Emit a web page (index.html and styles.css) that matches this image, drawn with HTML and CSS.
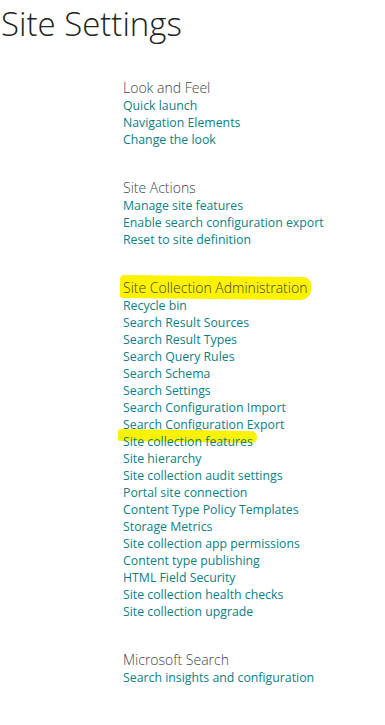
FILE: index.html
```html
<!DOCTYPE html>
<html lang="en">
<head>
    <meta charset="UTF-8">
    <meta name="viewport" content="width=device-width, initial-scale=1.0">
    <title>Site Settings</title>
    <link rel="stylesheet" href="styles.css">
</head>
<body>
    <h1 class="page-title">Site Settings</h1>

    <div class="settings">
        <div class="group">
            <h3>Look and Feel</h3>
            <a href="#">Quick launch</a>
            <a href="#">Navigation Elements</a>
            <a href="#">Change the look</a>
        </div>

        <div class="group">
            <h3>Site Actions</h3>
            <a href="#">Manage site features</a>
            <a href="#">Enable search configuration export</a>
            <a href="#">Reset to site definition</a>
        </div>

        <div class="group">
            <h3><span class="marker marker-big">Site Collection Administration</span></h3>
            <a href="#">Recycle bin</a>
            <a href="#">Search Result Sources</a>
            <a href="#">Search Result Types</a>
            <a href="#">Search Query Rules</a>
            <a href="#">Search Schema</a>
            <a href="#">Search Settings</a>
            <a href="#">Search Configuration Import</a>
            <a href="#">Search Configuration Export</a>
            <a href="#"><span class="marker marker-small">Site collection features</span></a>
            <a href="#">Site hierarchy</a>
            <a href="#">Site collection audit settings</a>
            <a href="#">Portal site connection</a>
            <a href="#">Content Type Policy Templates</a>
            <a href="#">Storage Metrics</a>
            <a href="#">Site collection app permissions</a>
            <a href="#">Content type publishing</a>
            <a href="#">HTML Field Security</a>
            <a href="#">Site collection health checks</a>
            <a href="#">Site collection upgrade</a>
        </div>

        <div class="group">
            <h3>Microsoft Search</h3>
            <a href="#">Search insights and configuration</a>
        </div>
    </div>
</body>
</html>
```

FILE: styles.css
```css
body {
    margin: 0;
    padding: 0;
    background: #fff;
    font-family: 'Open Sans', 'Noto Sans', sans-serif;
    color: #333;
}
.page-title {
    margin: 0;
    padding: 3px 0 0 1px;
    font-size: 33px;
    font-weight: 300;
    line-height: 42px;
    color: #222;
}
.settings {
    padding: 34px 0 0 123px;
}
.group {
    display: flex;
    flex-direction: column;
    align-items: flex-start;
    margin-bottom: 31px;
}
.group h3 {
    margin: 0;
    font-size: 14px;
    font-weight: 300;
    line-height: 18px;
    color: #444;
}
.group a {
    font-size: 12.3px;
    line-height: 17px;
    color: #0b7f86;
    text-decoration: none;
}
.marker {
    position: relative;
    z-index: 0;
}
.marker::before {
    content: "";
    position: absolute;
    z-index: -1;
    background: #fdf200;
}
.marker-big::before {
    left: -3px;
    right: -4px;
    top: -2px;
    bottom: -2px;
    border-radius: 4px 8px 10px 3px;
    transform: rotate(0.6deg);
}
.marker-small::before {
    left: -5px;
    right: -4px;
    top: -3px;
    height: 12px;
    border-radius: 3px 6px 5px 2px;
    transform: rotate(0.8deg);
}
```
